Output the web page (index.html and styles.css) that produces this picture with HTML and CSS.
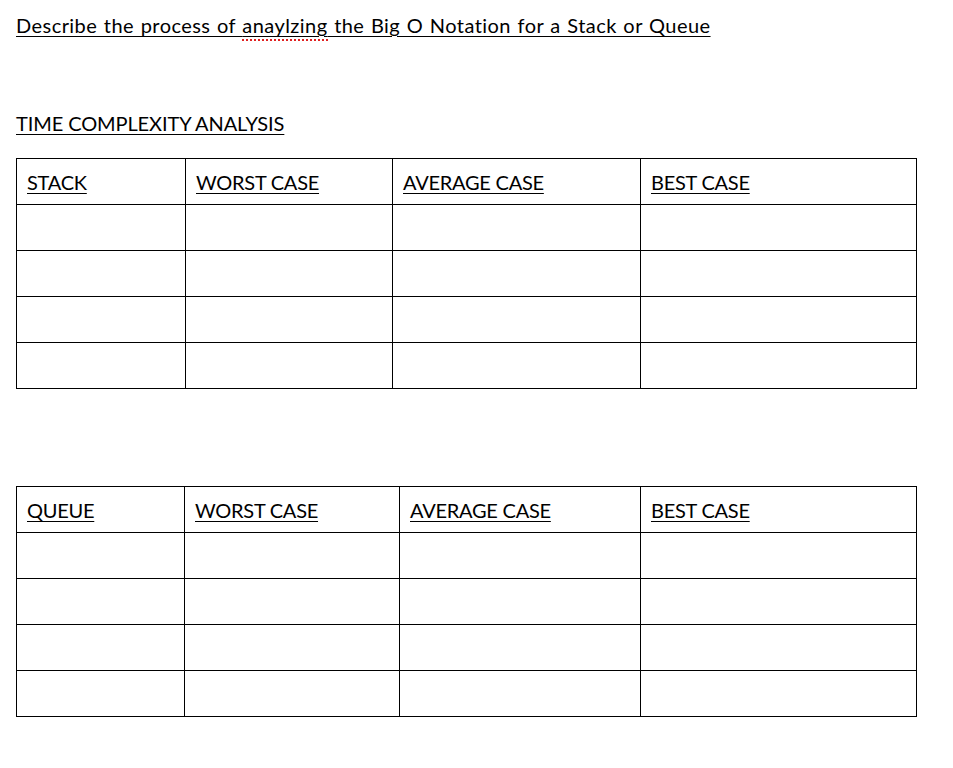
FILE: index.html
```html
<!DOCTYPE html>
<html>
<head>
<meta charset="utf-8">
<link rel="stylesheet" href="styles.css">
</head>
<body>
<div class="doc">
  <p class="title">Describe the process of <span class="misspelled">anaylzing</span> the Big O Notation for a Stack or Queue</p>
  <p class="heading">TIME COMPLEXITY ANALYSIS</p>
  <table class="grid stack">
    <colgroup><col class="c1"><col class="c2"><col class="c3"><col class="c4"></colgroup>
    <tr class="head"><td>STACK</td><td>WORST CASE</td><td>AVERAGE CASE</td><td>BEST CASE</td></tr>
    <tr><td></td><td></td><td></td><td></td></tr>
    <tr><td></td><td></td><td></td><td></td></tr>
    <tr><td></td><td></td><td></td><td></td></tr>
    <tr><td></td><td></td><td></td><td></td></tr>
  </table>
  <table class="grid queue">
    <colgroup><col class="c1"><col class="c2"><col class="c3"><col class="c4"></colgroup>
    <tr class="head"><td>QUEUE</td><td>WORST CASE</td><td>AVERAGE CASE</td><td>BEST CASE</td></tr>
    <tr><td></td><td></td><td></td><td></td></tr>
    <tr><td></td><td></td><td></td><td></td></tr>
    <tr><td></td><td></td><td></td><td></td></tr>
    <tr><td></td><td></td><td></td><td></td></tr>
  </table>
</div>
</body>
</html>
```
FILE: styles.css
```css
html, body {
  margin: 0;
  padding: 0;
  background: #ffffff;
}
body {
  font-family: Lato, "Liberation Sans", sans-serif;
  font-size: 20px;
  line-height: 24px;
  color: #000000;
}
.doc {
  padding: 13px 0 0 16px;
}
.title, .heading {
  margin: 0;
  text-decoration: underline;
  text-decoration-thickness: 1px;
  text-underline-offset: 3px;
}
.title {
  letter-spacing: 0.45px;
  word-spacing: 1px;
}
.misspelled {
  border-bottom: 2px dotted #e02020;
  padding-bottom: 2px;
}
.heading {
  margin-top: 74px;
  letter-spacing: -0.1px;
}
.grid {
  border-collapse: collapse;
  table-layout: fixed;
  width: 900px;
}
.stack {
  margin-top: 23px;
}
.queue {
  margin-top: 97px;
}
.grid td {
  border: 1px solid #000000;
  height: 46px;
  padding: 1px 10px 0;
  box-sizing: border-box;
  vertical-align: middle;
  white-space: nowrap;
}
.head td {
  text-decoration: underline;
  text-decoration-thickness: 1px;
  text-underline-offset: 3px;
  letter-spacing: -0.25px;
}
.stack .c1 { width: 169px; }
.stack .c2 { width: 207px; }
.stack .c3 { width: 248px; }
.stack .c4 { width: 276px; }
.queue .c1 { width: 168px; }
.queue .c2 { width: 215px; }
.queue .c3 { width: 241px; }
.queue .c4 { width: 276px; }
```
